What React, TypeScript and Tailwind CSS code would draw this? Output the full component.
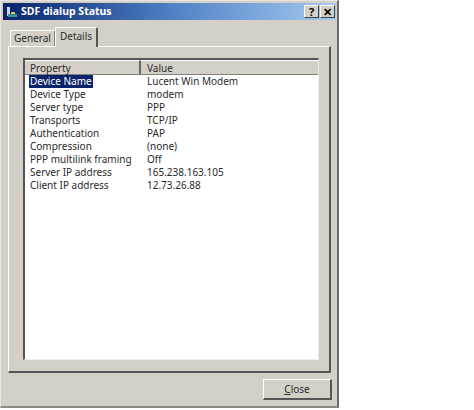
import React from 'react';

const rows = [
  ['Device Name', 'Lucent Win Modem'],
  ['Device Type', 'modem'],
  ['Server type', 'PPP'],
  ['Transports', 'TCP/IP'],
  ['Authentication', 'PAP'],
  ['Compression', '(none)'],
  ['PPP multilink framing', 'Off'],
  ['Server IP address', '165.238.163.105'],
  ['Client IP address', '12.73.26.88'],
];

const font = { fontFamily: '"Noto Sans", "Liberation Sans", sans-serif' };

const CaptionButton: React.FC<{ children: React.ReactNode }> = ({ children }) => (
  <div className="w-[15px] h-[13px] bg-[#d4d0c8] border border-t-white border-l-white border-r-[#404040] border-b-[#404040] flex items-center justify-center text-[11px] leading-none font-bold text-black">
    {children}
  </div>
);

const App: React.FC = () => {
  return (
    <div className="w-[474px] h-[410px] bg-white overflow-hidden text-[10px] text-[#2a2a2a]" style={font}>
      <div className="w-[339px] h-[408px] bg-[#d4d0c8] border-t border-l border-t-[#e8e6e0] border-l-[#e8e6e0] border-r-2 border-b-2 border-r-[#6b6b68] border-b-[#8a8a86] pl-[2px] pr-[1px] pt-[2px] flex flex-col">
        <div className="h-[17px] shrink-0 flex items-center justify-between pl-[2px] pr-[1px] bg-gradient-to-r from-[#0a246a] via-[#4f80c4] to-[#a6caf0]">
          <div className="flex items-center gap-[2px]">
            <svg width="14" height="14" viewBox="0 0 14 14">
              <rect x="2" y="2" width="3" height="9" fill="#c8d8e8" />
              <rect x="3" y="9" width="9" height="3" fill="#3f8f8a" />
              <rect x="6" y="7" width="4" height="2" fill="#d9c27a" />
            </svg>
            <span className="text-white font-bold text-[10.5px] leading-none">SDF dialup Status</span>
          </div>
          <div className="flex gap-[1px]">
            <CaptionButton>?</CaptionButton>
            <CaptionButton>✕</CaptionButton>
          </div>
        </div>

        <div className="flex items-end h-[26px] shrink-0 pl-[7px]">
          <div className="w-[45px] h-[16px] bg-[#d4d0c8] border-t border-l border-white border-r border-r-[#808080] rounded-t-[2px] flex items-center justify-center">
            General
          </div>
          <div className="relative z-10 w-[43px] h-[20px] -mb-[1px] bg-[#d4d0c8] border-t border-l border-white border-r-2 border-r-[#555] rounded-t-[2px] flex justify-center pt-[1px]">
            Details
          </div>
        </div>

        <div className="ml-[5px] w-[323px] h-[327px] shrink-0 bg-[#d4d0c8] border-t border-l border-white border-r-2 border-b-2 border-r-[#555] border-b-[#555] pt-[11px] pl-[14px]">
          <div className="w-[296px] h-[302px] bg-white border-t-2 border-l-2 border-t-[#555] border-l-[#555] border-r border-b border-r-[#eeeeea] border-b-[#eeeeea]">
            <div className="flex h-[15px] bg-[#d4d0c8] border-b border-[#808080]">
              <div className="w-[116px] pl-[5px] border-t border-t-white border-r-2 border-r-[#666] leading-[14px]">Property</div>
              <div className="flex-1 pl-[6px] border-t border-t-white leading-[14px]">Value</div>
            </div>
            {rows.map(([name, value], i) => (
              <div key={name} className="flex h-[13px] leading-[13px]">
                <div className="w-[116px] pl-[4px]">
                  <span className={i === 0 ? 'inline-block bg-[#0a246a] text-white px-[1px]' : 'inline-block px-[1px]'}>{name}</span>
                </div>
                <div className="flex-1 pl-[6px]">{value}</div>
              </div>
            ))}
          </div>
        </div>

        <div className="flex justify-end pr-[4px] pt-[6px]">
          <div className="w-[69px] h-[21px] bg-[#d4d0c8] border-t border-l border-white border-r-2 border-b-2 border-r-[#555] border-b-[#555] flex items-center justify-center">
            <span><span className="underline">C</span>lose</span>
          </div>
        </div>
      </div>
    </div>
  );
};

export default App;
